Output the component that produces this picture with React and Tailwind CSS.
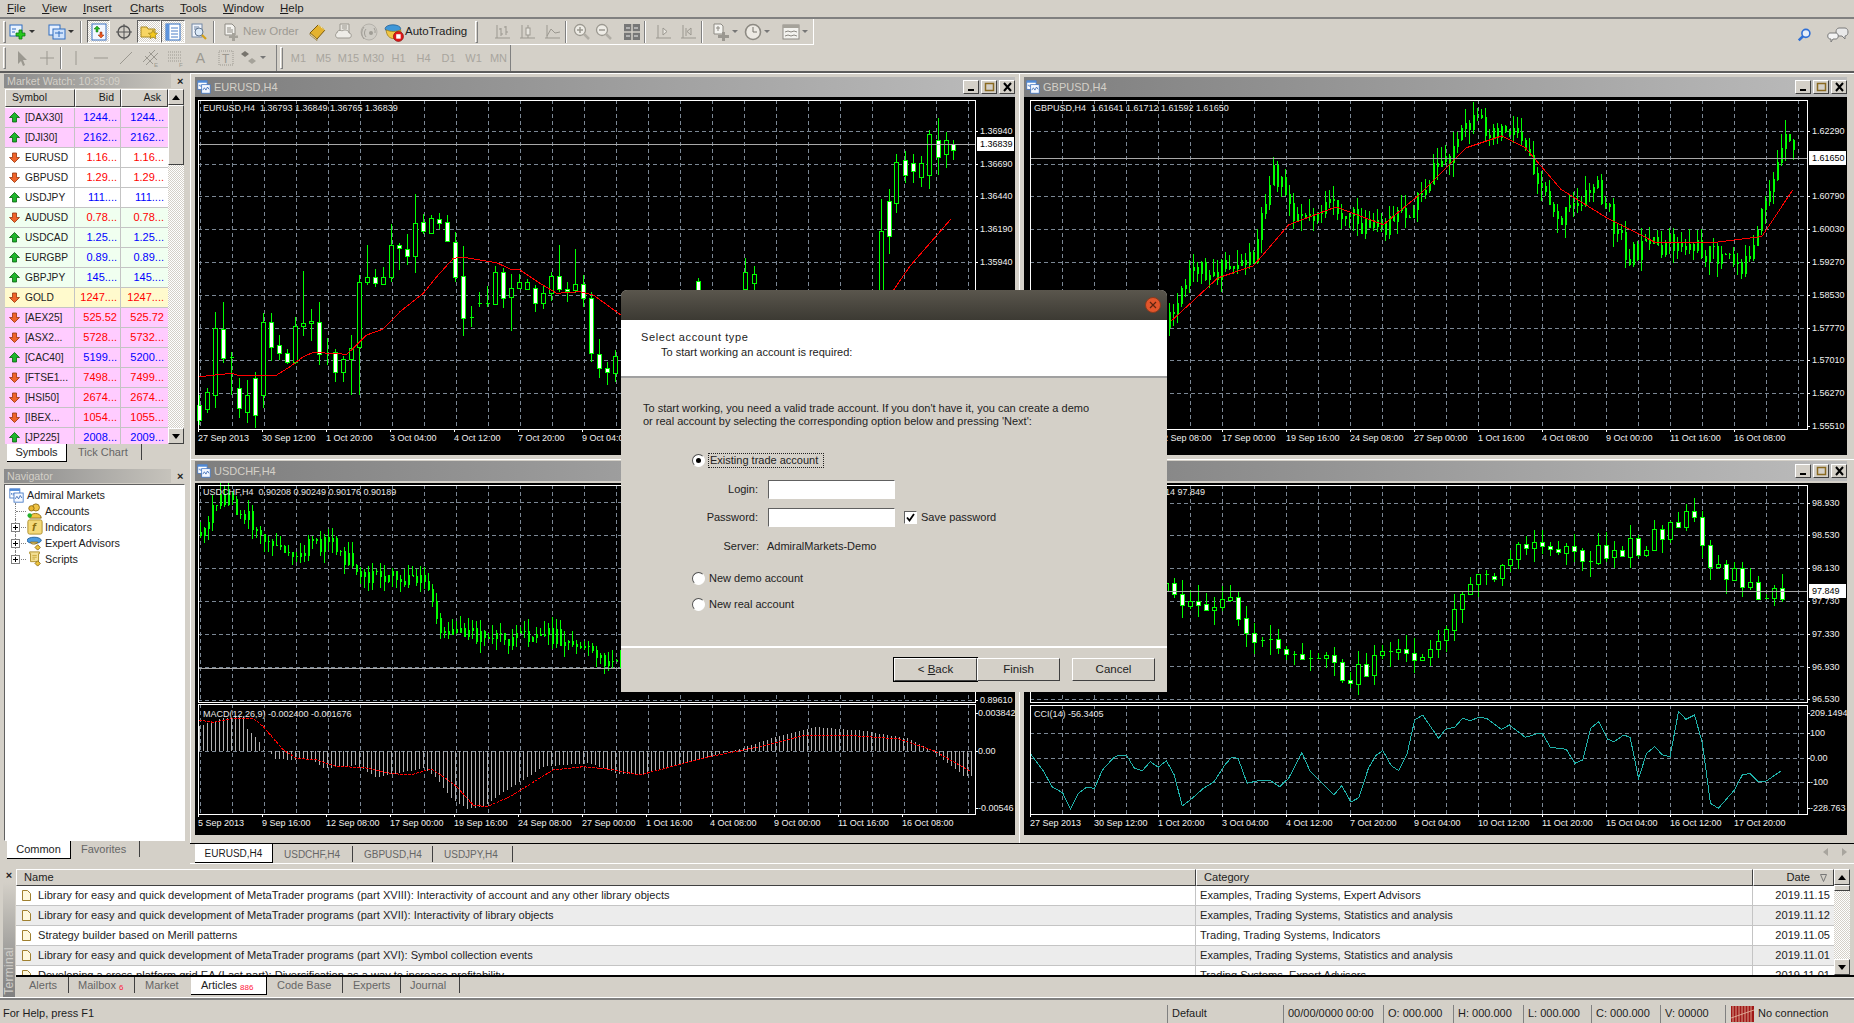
import React from 'react'

const raised = "border border-t-white border-l-white border-r-[#404040] border-b-[#404040]"
const sunken = "border border-t-[#606060] border-l-[#606060] border-r-white border-b-white"
const track = "bg-[repeating-conic-gradient(#d4d0c8_0%_25%,#ffffff_0%_50%)] bg-[length:2px_2px]"
const GRN = '#00ff00'
const GRID = '#7b8794'
const G = '#9b9890'

// ---- chart helpers ----
const rng = (seed) => () => {
  seed = (seed + 0x6d2b79f5) | 0
  let t = Math.imul(seed ^ (seed >>> 15), 1 | seed)
  t = (t + Math.imul(t ^ (t >>> 7), 61 | t)) ^ t
  return ((t ^ (t >>> 14)) >>> 0) / 4294967296
}
const interp = (path, x) => {
  if (x <= path[0][0]) return path[0][1]
  for (let i = 1; i < path.length; i++) {
    if (x <= path[i][0]) {
      const [a, b] = [path[i - 1], path[i]]
      return a[1] + ((x - a[0]) / (b[0] - a[0])) * (b[1] - a[1])
    }
  }
  return path[path.length - 1][1]
}
const d = (pts) => pts.map(([x, y]) => [x * 1.1824, y * 1.1824])
const z8 = (pts) => pts.map(([x, y]) => [190 + x / 3, 75 + y / 3])
const z9 = (pts) => pts.map(([x, y]) => [190 + x / 3, 690 + y / 3])

function genCandles(path, x0, x1, step, seed, spread) {
  const r = rng(seed)
  const out = []
  let prev = interp(path, x0 - step)
  for (let x = x0; x <= x1; x += step) {
    const c = interp(path, x) + (r() - 0.5) * spread
    const top = Math.min(prev, c)
    const bot = Math.max(prev, c)
    out.push([x, top - r() * spread * 0.7, top, bot, bot + r() * spread * 0.7, c > prev])
    prev = c
  }
  return out
}

// x, wick top, body top, body bottom, wick bottom, white body (zoomed coordinates)
const eurLeft = [
  [28, 960, 990, 1035, 1050, 1], [52, 940, 950, 1000, 1015, 0], [76, 712, 760, 960, 1000, 0], [100, 680, 762, 848, 865, 1],
  [124, 832, 847, 848, 960, 0], [148, 910, 940, 1000, 1030, 1], [172, 915, 960, 1010, 1045, 0], [196, 890, 910, 1020, 1060, 1],
  [220, 715, 742, 960, 1000, 0], [244, 715, 740, 815, 858, 1], [268, 780, 811, 835, 855, 1], [292, 822, 835, 862, 866, 1],
  [316, 725, 754, 862, 866, 0], [340, 588, 745, 754, 783, 0], [364, 702, 739, 746, 798, 0], [388, 682, 740, 835, 870, 1],
  [412, 790, 835, 837, 870, 0], [436, 822, 832, 892, 920, 1], [460, 842, 853, 893, 920, 0], [484, 780, 818, 850, 960, 0],
  [508, 600, 622, 817, 960, 0], [532, 510, 606, 620, 630, 0], [556, 582, 607, 625, 636, 1], [580, 576, 606, 628, 630, 0],
  [604, 448, 511, 607, 622, 0], [628, 504, 511, 520, 585, 1], [652, 477, 523, 544, 570, 1], [676, 358, 445, 545, 594, 0],
  [700, 418, 442, 470, 478, 1], [724, 420, 430, 476, 476, 0], [748, 415, 431, 442, 462, 1], [772, 420, 442, 500, 500, 1],
  [796, 472, 500, 605, 622, 1], [820, 514, 602, 728, 783, 1], [844, 693, 725, 727, 756, 0], [868, 650, 683, 685, 695, 0],
  [892, 634, 683, 686, 695, 0], [916, 572, 590, 685, 686, 0], [940, 578, 590, 667, 698, 1], [964, 597, 640, 667, 768, 0],
  [988, 597, 620, 637, 642, 0], [1012, 612, 620, 642, 645, 0], [1036, 630, 640, 685, 710, 1], [1060, 632, 655, 686, 702, 0],
  [1084, 590, 604, 655, 678, 0], [1108, 510, 604, 643, 650, 1], [1132, 622, 643, 650, 680, 1], [1156, 522, 628, 647, 655, 0],
  [1180, 600, 628, 670, 695, 1], [1204, 650, 670, 835, 862, 1], [1228, 792, 838, 880, 910, 1], [1252, 860, 880, 892, 930, 1],
  [1276, 825, 842, 892, 920, 0],
].map(([x, a, b, c, e, f]) => [190 + x / 3, 75 + a / 3, 75 + b / 3, 75 + c / 3, 75 + e / 3, !!f])

const eurRight = [
  [590, 235, 238, 246, 262, 1], [630, 218, 230, 244, 260, 0], [638, 225, 232, 240, 255, 0],
  [745, 168, 195, 245, 262, 0], [752, 160, 170, 200, 215, 1], [758, 130, 137, 172, 180, 0], [765, 128, 135, 148, 155, 1],
  [772, 130, 138, 145, 155, 1], [779, 132, 138, 150, 158, 0], [786, 110, 113, 148, 160, 0], [793, 100, 118, 132, 148, 1],
  [800, 112, 118, 130, 142, 0], [806, 118, 122, 127, 135, 1],
].map(([x, a, b, c, e, f]) => [x * 1.1824, a * 1.1824, b * 1.1824, c * 1.1824, e * 1.1824, !!f])

const eurMa = [
  ...z8([[28, 905], [95, 898], [125, 895], [140, 900], [260, 900], [300, 875], [340, 845], [370, 832], [470, 838], [500, 810], [530, 780], [580, 762], [630, 710], [700, 655], [740, 605], [790, 550], [820, 547], [920, 563], [960, 582], [990, 585], [1050, 625], [1100, 655], [1170, 650], [1210, 660], [1290, 718]]),
  [880, 310], [910, 266], [951, 219],
]

const gbpPath = d([[980, 280], [990, 270], [1010, 225], [1030, 230], [1060, 215], [1075, 140], [1095, 180], [1130, 175], [1160, 195], [1190, 180], [1215, 140], [1245, 105], [1285, 110], [1305, 160], [1320, 185], [1350, 155], [1375, 215], [1420, 205], [1480, 225], [1495, 160], [1510, 120], [1520, 130]])
const gbpMa = d([[990, 272], [1030, 235], [1060, 225], [1090, 190], [1130, 175], [1170, 190], [1200, 165], [1240, 125], [1270, 115], [1290, 125], [1320, 160], [1360, 185], [1400, 205], [1450, 205], [1490, 200], [1516, 161]])
const chfPath = d([[170, 450], [185, 420], [205, 430], [230, 465], [280, 460], [310, 490], [360, 490], [370, 535], [420, 540], [460, 535], [500, 550], [525, 565]])
const jpyPath = d([[985, 500], [1010, 520], [1040, 510], [1060, 535], [1100, 550], [1140, 575], [1170, 555], [1190, 560], [1220, 535], [1250, 490], [1290, 465], [1340, 470], [1390, 460], [1430, 430], [1445, 480], [1480, 490], [1495, 510], [1510, 500]])

const macdSignal = [
  ...z9([[26, 90], [70, 97], [130, 85], [190, 85], [220, 110], [280, 180], [320, 205], [380, 210], [440, 230], [520, 232], [600, 250], [660, 255], [725, 237], [760, 260], [800, 290], [850, 345], [890, 350], [960, 320], [1040, 270], [1090, 240], [1180, 230], [1260, 238], [1350, 255]]),
  ...d([[600, 640], [640, 632], [680, 622], [720, 622], [760, 625], [790, 635], [820, 652]]),
]
const macdHist = [
  ...z9([[26, 110], [50, 100], [100, 85], [160, 80], [172, 115], [208, 155], [222, 184], [240, 184], [250, 205], [300, 210], [360, 205], [400, 235], [500, 225], [560, 262], [620, 250], [700, 235], [740, 265], [780, 320], [830, 356], [880, 350], [920, 320], [1000, 270], [1060, 230], [1150, 222], [1200, 220], [1280, 250], [1350, 255]]),
  ...d([[600, 640], [630, 632], [660, 622], [690, 615], [730, 618], [770, 625], [790, 636], [815, 656]]),
]
const cci = [[20, 162], [45, 215], [60, 260], [80, 278], [95, 328], [110, 280], [125, 262], [140, 265], [155, 210], [175, 175], [185, 165], [200, 165], [215, 205], [230, 212], [245, 185], [260, 202], [275, 182], [290, 225], [305, 318], [320, 300], [345, 265], [365, 245], [385, 195], [398, 172], [410, 175], [427, 250], [445, 243], [470, 241], [488, 260], [505, 235], [530, 158], [545, 212], [565, 245], [590, 285], [605, 257], [622, 306], [637, 293], [655, 205], [670, 165], [682, 152], [698, 197], [712, 212], [728, 160], [742, 60], [757, 45], [772, 80], [787, 115], [800, 88], [817, 82], [832, 55], [847, 62], [862, 52], [877, 55], [905, 88], [920, 75], [950, 112], [975, 100], [982, 100], [997, 142], [1027, 148], [1043, 190], [1058, 180], [1073, 85], [1088, 65], [1105, 118], [1117, 125], [1135, 105], [1147, 112], [1163, 235], [1178, 160], [1193, 140], [1208, 165], [1222, 170], [1238, 35], [1252, 58], [1268, 45], [1283, 130], [1298, 310], [1313, 325], [1343, 270], [1358, 225], [1372, 220], [1388, 245], [1403, 243], [1430, 214]]
  .map(([x, y]) => [1020 + x / 1.88, 700 + y / 3])

const range = (a, b, s) => { const o = []; for (let v = a; v <= b; v += s) o.push(v); return o }
const pts = (p) => p.map(([x, y]) => `${x.toFixed(1)},${y.toFixed(1)}`).join(' ')

function Candles({ data, w = 4, solid = false }) {
  return data.map(([x, a, b, c, e, white], i) => {
    const px = Math.round(x) + 0.5
    if (solid) {
      return (
        <g key={i} shapeRendering="crispEdges">
          <line x1={px} x2={px} y1={a} y2={e} stroke={GRN} />
          <line x1={px + 1} x2={px + 1} y1={b} y2={c + 1} stroke={GRN} />
        </g>
      )
    }
    return (
      <g key={i} shapeRendering="crispEdges">
        <line x1={px} x2={px} y1={a} y2={e} stroke={GRN} />
        {c - b < 2
          ? <line x1={px - Math.floor(w / 2)} x2={px + Math.ceil(w / 2)} y1={Math.round(b) + 0.5} y2={Math.round(b) + 0.5} stroke={GRN} />
          : <rect x={px - w / 2} y={Math.round(b) + 0.5} width={w} height={Math.round(c - b)} fill={white ? '#fff' : '#000'} stroke={GRN} />}
      </g>
    )
  })
}

function Plot({ left, right, top, bottom, hs, vs = 199.7, children }) {
  return (
    <g>
      <g stroke={GRID} strokeDasharray="4 3" shapeRendering="crispEdges">
        {range(vs, right - 2, 32).map((x) => <line key={x} x1={Math.round(x) + 0.5} x2={Math.round(x) + 0.5} y1={top} y2={bottom} />)}
        {hs.map((y) => <line key={y} x1={left} x2={right} y1={Math.round(y) + 0.5} y2={Math.round(y) + 0.5} />)}
      </g>
      {children}
      <rect x={left + 0.5} y={top + 0.5} width={right - left} height={bottom - top} fill="none" stroke="#fff" shapeRendering="crispEdges" />
    </g>
  )
}

function Axis({ x, labels, dx = 5 }) {
  return labels.map(([t, y]) => (
    <g key={t}>
      <line x1={x} x2={x + 3} y1={Math.round(y) + 0.5} y2={Math.round(y) + 0.5} stroke="#fff" shapeRendering="crispEdges" />
      <text x={x + dx} y={y + 3} fontSize="9" fill="#f0f0f0">{t}</text>
    </g>
  ))
}

function TimeAxis({ left, y, labels }) {
  return labels.map((t, i) => (
    <g key={t}>
      <line x1={left + 64 * i + 0.5} x2={left + 64 * i + 0.5} y1={y} y2={y + 3} stroke="#fff" shapeRendering="crispEdges" />
      <text x={left + 64 * i} y={y + 12} fontSize="9" fill="#f0f0f0">{t}</text>
    </g>
  ))
}

function PriceTag({ x, y, t }) {
  return (
    <g>
      <rect x={x + 1} y={y - 7} width="37" height="14" fill="#fff" />
      <text x={x + 4} y={y + 3} fontSize="9" fill="#000">{t}</text>
    </g>
  )
}

const Info = ({ x, y, t }) => <text x={x} y={y} fontSize="9" fill="#e8e8e8" xmlSpace="preserve">{t}</text>
const PriceLine = ({ a, b, y }) => <line x1={a} x2={b} y1={y + 0.5} y2={y + 0.5} stroke="#a8a8a8" shapeRendering="crispEdges" />
const Curve = ({ p, c = '#ff0000', dash }) => <polyline points={pts(p)} fill="none" stroke={c} strokeDasharray={dash} shapeRendering="crispEdges" />

function ChartSvg({ ox, oy, w, h, children }) {
  return (
    <svg width={w} height={h} viewBox={`${ox} ${oy} ${w} ${h}`} className="block bg-black">{children}</svg>
  )
}

const timesA = ['5 Sep 2013', '9 Sep 16:00', '12 Sep 08:00', '17 Sep 00:00', '19 Sep 16:00', '24 Sep 08:00', '27 Sep 00:00', '1 Oct 16:00', '4 Oct 08:00', '9 Oct 00:00', '11 Oct 16:00', '16 Oct 08:00']
const timesB = ['27 Sep 2013', '30 Sep 12:00', '1 Oct 20:00', '3 Oct 04:00', '4 Oct 12:00', '7 Oct 20:00', '9 Oct 04:00', '10 Oct 12:00', '11 Oct 20:00', '15 Oct 04:00', '16 Oct 12:00', '17 Oct 20:00']
const hsTop = range(130.7, 420, 32.8)

function EurChart() {
  return (
    <ChartSvg ox={195} oy={97} w={820} h={358}>
      <Plot left={198} right={975} top={100} bottom={429} hs={hsTop}>
        <Candles data={eurLeft} />
        <Candles data={eurRight} />
        <Curve p={eurMa} />
        <Info x={203} y={111} t="EURUSD,H4  1.36793 1.36849 1.36765 1.36839" />
        <PriceLine a={199} b={976} y={144} />
      </Plot>
      <Axis x={975} labels={[['1.36940', 130.7], ['1.36690', 163.5], ['1.36440', 196.3], ['1.36190', 229.1], ['1.35940', 261.9]]} />
      <PriceTag x={976} y={144} t="1.36839" />
      <TimeAxis left={198} y={429} labels={timesB.slice(0, 8)} />
    </ChartSvg>
  )
}

function GbpChart() {
  return (
    <ChartSvg ox={1024} oy={97} w={823} h={358}>
      <Plot left={1030} right={1807} top={100} bottom={429} hs={hsTop} vs={1029.7}>
        <Candles data={genCandles(gbpPath, 1161, 1793, 4, 11, 22)} solid />
        <Curve p={gbpMa} />
        <Info x={1034} y={111} t="GBPUSD,H4  1.61641 1.61712 1.61592 1.61650" />
        <PriceLine a={1031} b={1808} y={158} />
      </Plot>
      <Axis x={1807} labels={[['1.62290', 130.7], ['1.60790', 196.3], ['1.60030', 229.1], ['1.59270', 261.9], ['1.58530', 294.7], ['1.57770', 327.5], ['1.57010', 360.3], ['1.56270', 393.1], ['1.55510', 425.9]]} />
      <PriceTag x={1808} y={158} t="1.61650" />
      <TimeAxis left={1030} y={429} labels={timesA} />
    </ChartSvg>
  )
}

function ChfChart() {
  return (
    <ChartSvg ox={195} oy={483} w={820} h={352}>
      <Plot left={198} right={975} top={485} bottom={702} hs={range(502, 700, 33)}>
        <Candles data={genCandles(chfPath, 200, 628, 4, 5, 18)} solid />
        <Info x={203} y={495} t="USDCHF,H4  0.90208 0.90249 0.90176 0.90189" />
        <PriceLine a={199} b={975} y={668} />
      </Plot>
      <Axis x={975} labels={[['0.89610', 700]]} />
      <Plot left={198} right={975} top={704} bottom={814} hs={[751]}>
        {range(199.5, 972, 4).map((x) => {
          const y = interp(macdHist, x)
          return <line key={x} x1={x} x2={x} y1={751} y2={y} stroke="#b0b0b0" shapeRendering="crispEdges" />
        })}
        <Curve p={macdSignal} dash="3 1" />
        <Info x={203} y={717} t="MACD(12,26,9) -0.002400 -0.001676" />
      </Plot>
      <Axis x={975} dx={3} labels={[['0.003842', 713], ['0.00', 751], ['-0.00546', 808]]} />
      <TimeAxis left={198} y={814} labels={timesA} />
    </ChartSvg>
  )
}

function JpyChart() {
  return (
    <ChartSvg ox={1024} oy={483} w={823} h={352}>
      <Plot left={1030} right={1807} top={485} bottom={702} hs={range(502.5, 700, 32.8)} vs={1029.7}>
        <Candles data={genCandles(jpyPath, 1166, 1786, 8, 23, 22)} />
        <Info x={1034} y={495} t="USDJPY,H4  97.814 97.860 97.814 97.849" />
        <PriceLine a={1031} b={1808} y={591} />
      </Plot>
      <Axis x={1807} labels={[['98.930', 502.5], ['98.530', 535.3], ['98.130', 568.1], ['97.730', 600.9], ['97.330', 633.7], ['96.930', 666.5], ['96.530', 699.3]]} />
      <PriceTag x={1808} y={591} t="97.849" />
      <Plot left={1030} right={1807} top={705} bottom={814} hs={[733, 758, 782]} vs={1029.7}>
        <Curve p={cci} c="#20b2aa" />
        <Info x={1034} y={717} t="CCI(14) -56.3405" />
      </Plot>
      <Axis x={1807} dx={3} labels={[['209.1494', 713], ['100', 733], ['0.00', 758], ['-100', 782], ['-228.763', 808]]} />
      <TimeAxis left={1030} y={814} labels={timesB} />
    </ChartSvg>
  )
}

// ---- icons ----
const Svg = ({ s = 18, children, className }) => <svg width={s} height={s} viewBox="0 0 18 18" className={className}>{children}</svg>
const Caret = ({ c = '#333' }) => <svg width="6" height="4" viewBox="0 0 6 4" className="ml-[2px]"><path d="M0 0h6L3 3z" fill={c} /></svg>

const WinIco = ({ s = 14 }) => (
  <Svg s={s}>
    <rect x="1" y="1" width="12" height="11" fill="#fff" stroke="#3f74c4" />
    <rect x="1" y="1" width="12" height="2.5" fill="#4f8ad8" />
    <rect x="6" y="6" width="11" height="11" fill="#f4f8ff" stroke="#3f74c4" />
    <path d="M7.5 13l2-3 2 3 2-4 2 3" fill="none" stroke="#2e62b0" />
    <path d="M3 6v2M5 6v3" stroke="#3f74c4" />
  </Svg>
)
const NewChartIco = () => (
  <Svg>
    <rect x="1" y="2" width="12" height="11" fill="#eaf3ff" stroke="#2f6cc0" />
    <path d="M3 6h4M3 9h3" stroke="#2f6cc0" />
    <path d="M10 7h3v3h3v3h-3v3h-3v-3H7v-3h3z" fill="#25c81e" stroke="#0f7a10" strokeWidth=".8" />
  </Svg>
)
const ProfilesIco = () => (
  <Svg>
    <rect x="1" y="2" width="11" height="10" fill="#e8f1ff" stroke="#2f6cc0" />
    <rect x="5" y="6" width="12" height="10" fill="#cfe2fb" stroke="#2f6cc0" />
    <path d="M7 10h8M11 8v6" stroke="#2f6cc0" />
  </Svg>
)
const WatchIco = () => (
  <Svg>
    <rect x="2" y="1" width="14" height="16" fill="#f3f7ff" stroke="#3f74c4" />
    <path d="M7 3l3 3H8v3H6V6H4z" fill="#25b825" stroke="#0d6d0d" strokeWidth=".5" />
    <path d="M11 15l-3-3h2V9h2v3h2z" fill="#ee5a22" stroke="#8a2b08" strokeWidth=".5" />
  </Svg>
)
const CrossIco = () => (
  <Svg>
    <circle cx="9" cy="9" r="6" fill="none" stroke="#555" strokeWidth="1.4" />
    <path d="M9 1v16M1 9h16" stroke="#555" />
  </Svg>
)
const FolderStarIco = () => (
  <Svg>
    <path d="M1 4h6l1 2h7v8H1z" fill="#f7d564" stroke="#a98920" />
    <path d="M13 7l1.4 3 3.2.3-2.4 2.2.7 3.2-2.9-1.7-2.9 1.7.7-3.2L8.4 10.3l3.2-.3z" fill="#f5c91f" stroke="#8a7414" strokeWidth=".6" />
  </Svg>
)
const TermIco = () => (
  <Svg>
    <rect x="2" y="1" width="14" height="16" fill="#fff" stroke="#2f6cc0" />
    <rect x="2" y="1" width="3.5" height="16" fill="#5c93dc" />
    <path d="M7 5h7M7 8h7M7 11h7M7 14h7" stroke="#4a7fc8" />
  </Svg>
)
const TesterIco = () => (
  <Svg>
    <rect x="2" y="1" width="10" height="13" fill="#f0f4fb" stroke="#7288a6" />
    <circle cx="9" cy="9" r="4" fill="#dbe9f7" stroke="#60758f" />
    <path d="M12 12l4 4" stroke="#d4a017" strokeWidth="2.2" />
    <path d="M4 4h5M4 6h3" stroke="#7288a6" />
  </Svg>
)
const OrderIco = () => (
  <Svg>
    <path d="M3 1h7l3 3v8H3z" fill="#f4f3ef" stroke="#8d8a83" />
    <path d="M5 5h4M5 7h6M5 9h6" stroke="#8d8a83" />
    <path d="M10 10h3v2.500h3V15h-3v3h-3v-3H7v-2.500h3z" fill="#a5a29a" />
  </Svg>
)
const BookIco = () => (
  <Svg>
    <path d="M1 10l8-8 7 5-8 9z" fill="#e4b22e" stroke="#7a5a10" />
    <path d="M1 10l7 6v1.500L1 12z" fill="#f6e6b0" stroke="#7a5a10" strokeWidth=".6" />
    <path d="M9 2l7 5" stroke="#fbe48f" />
  </Svg>
)
const EditorIco = () => (
  <Svg>
    <path d="M5 1h9v9H5z" fill="#e6e4de" stroke={G} />
    <path d="M2 10c0-3 4-3 5-2 2-2 7-1 7 2 3 0 3 5 0 5H3c-3 0-3-5-1-5z" fill="#eeece7" stroke={G} />
    <path d="M7 3h5M7 5h5" stroke={G} />
  </Svg>
)
const SignalIco = () => (
  <Svg>
    <circle cx="9" cy="9" r="8" fill="#d0cdc6" stroke="#b5b2ab" />
    <circle cx="11" cy="10" r="2" fill="#a09d96" />
    <path d="M6 6a6 6 0 0 0 0 8M4 4a9 9 0 0 0 0 12M14 5a6 6 0 0 1 1 5" fill="none" stroke="#a09d96" />
  </Svg>
)
const AutoIco = () => (
  <Svg s={20}>
    <ellipse cx="8" cy="6" rx="7" ry="3.500" fill="#3f97d8" stroke="#1e5d96" strokeWidth=".7" />
    <path d="M2 7c0 5 3 8 7 8s7-3 6-8c-3 2-10 2-13 0z" fill="#f1c644" stroke="#9c7a14" strokeWidth=".7" />
    <circle cx="13" cy="13" r="4.500" fill="#e01818" stroke="#7e0a0a" strokeWidth=".6" />
    <rect x="11" y="11" width="4" height="4" fill="#fff" />
  </Svg>
)
const BarIco = ({ kind }) => (
  <Svg>
    <path d="M3 2v13M1 15h15" stroke={G} fill="none" />
    {kind === 0 && <path d="M7 5v8M7 6h-2M7 11h2M12 3v9M12 4h-2M12 9h2" stroke={G} />}
    {kind === 1 && <><path d="M9 2v13" stroke={G} /><rect x="7" y="5" width="4" height="7" fill="#e8e6e0" stroke={G} /></>}
    {kind === 2 && <path d="M3 13l4-7 4 4 5-1" stroke={G} fill="none" />}
    {kind === 3 && <path d="M8 5v7l4-3.500z" stroke={G} fill="#e8e6e0" />}
    {kind === 4 && <path d="M11 5v7l-4-3.500zM6 5v8" stroke={G} fill="none" />}
  </Svg>
)
const ZoomIco = ({ plus }) => (
  <Svg>
    <circle cx="7" cy="7" r="5.500" fill="#eeece6" stroke={G} strokeWidth="1.300" />
    <path d={plus ? 'M4 7h6M7 4v6' : 'M4 7h6'} stroke={G} strokeWidth="1.500" />
    <path d="M11 11l5 5" stroke="#b0ada5" strokeWidth="2.500" />
  </Svg>
)
const TileIco = () => (
  <Svg>
    <rect x="1" y="1" width="16" height="16" fill="#777" />
    <path d="M9 1v16M1 9h16" stroke="#d4d0c8" strokeWidth="1.500" />
    <path d="M3 5h4M11 5h4M3 13h4M11 13h4" stroke="#eee" />
  </Svg>
)
const AddIco = () => (
  <Svg>
    <path d="M2 1h7l2 2v8H2z" fill="#f4f3ef" stroke="#8d8a83" />
    <path d="M4 5h4M6 3v5" stroke="#8d8a83" />
    <path d="M10 9h3v3h4v3h-4v3h-3v-3H6v-3h4z" fill="#9a9790" />
  </Svg>
)
const ClockIco = () => (
  <Svg>
    <circle cx="9" cy="9" r="7.500" fill="#ece9e3" stroke="#8d8a83" strokeWidth="1.600" />
    <path d="M9 4v5h4" fill="none" stroke="#77746d" />
  </Svg>
)
const TemplIco = () => (
  <Svg>
    <rect x="1" y="2" width="16" height="14" fill="#f3f2ee" stroke="#8d8a83" />
    <rect x="1" y="2" width="16" height="3" fill="#a5a29a" />
    <path d="M3 9l3-1 3 1 3-1 3 1M3 13l3-1 3 1 3-1 3 1" fill="none" stroke="#8d8a83" />
  </Svg>
)
const SearchIco = () => (
  <Svg s={16}>
    <circle cx="10" cy="6" r="4.500" fill="#e6eef9" stroke="#2f6fd6" strokeWidth="1.800" />
    <path d="M7 9l-5 5" stroke="#2f6fd6" strokeWidth="2.800" />
  </Svg>
)
const ChatIco = () => (
  <svg width="22" height="18" viewBox="0 0 22 18">
    <path d="M12 1h6c4 0 4 8 0 8v3l-3-3h-3c-4 0-4-8 0-8z" fill="#e9e9e9" stroke="#7b7b7b" />
    <path d="M3 6h6c3 0 3 6 0 6H6l-2 3v-3H3c-3 0-3-6 0-6z" fill="#f4f4f4" stroke="#7b7b7b" />
  </svg>
)
const CursorIco = () => <Svg><path d="M5 2v13l3-3 2 5 2-1-2-5h4z" fill={G} /></Svg>
const LineIco = ({ p }) => <Svg><path d={p} stroke={G} fill="none" /></Svg>
const ChannelIco = () => (
  <Svg>
    <path d="M1 13L13 1M4 16L16 4M3 7l8 8M7 3l8 8" stroke={G} />
    <text x="12" y="18" fontSize="6" fill={G}>E</text>
  </Svg>
)
const FiboIco = () => (
  <Svg>
    <path d="M1 3h14M1 6h14M1 9h14M1 12h14" stroke={G} strokeDasharray="1 1" />
    <text x="12" y="18" fontSize="6" fill={G}>F</text>
  </Svg>
)
const TextIco = () => (
  <Svg>
    <rect x="2" y="2" width="14" height="14" fill="none" stroke={G} strokeDasharray="1 1" />
    <text x="5" y="14" fontSize="12" fill={G}>T</text>
  </Svg>
)
const ArrowsIco = () => (
  <Svg>
    <path d="M5 2l4 3-4 3-4-3z" fill="#77746d" />
    <path d="M12 9l4 3-4 3-4-3z" fill="#a5a29a" />
  </Svg>
)
const Up = () => <svg width="11" height="11" viewBox="0 0 11 11"><path d="M5.500 .5L10.500 5.500H7.500V10H3.500V5.500H.5z" fill="#1eb52a" stroke="#0a5f12" strokeWidth=".8" /></svg>
const Down = () => <svg width="11" height="11" viewBox="0 0 11 11"><path d="M5.500 10.500L10.500 5.500H7.500V1H3.500V5.500H.5z" fill="#f0632a" stroke="#96350c" strokeWidth=".8" /></svg>
const AccountsIco = () => (
  <Svg s={16}>
    <circle cx="10" cy="5" r="4" fill="#f0c445" stroke="#8b6a12" />
    <path d="M3 17c0-7 13-7 13 0z" fill="#f0c445" stroke="#8b6a12" />
    <circle cx="5" cy="6" r="3" fill="#e9b52f" stroke="#8b6a12" />
    <circle cx="3" cy="14" r="2.500" fill="#23b12c" />
  </Svg>
)
const IndicatorsIco = () => (
  <Svg s={16}>
    <rect x="1" y="1" width="16" height="16" rx="2" fill="#f3d97a" stroke="#a98920" />
    <text x="5.500" y="14" fontSize="13" fontStyle="italic" fontWeight="700" fill="#8a6d10">f</text>
  </Svg>
)
const ExpertIco = () => (
  <Svg s={16}>
    <ellipse cx="8" cy="6" rx="8" ry="3.500" fill="#4d9be0" stroke="#1e5d96" />
    <path d="M4 8c0 3 7 3 8 0z" fill="#f2d879" stroke="#8b6a12" />
    <path d="M12 11l3 3-3 3-3-3z" fill="#eec33b" stroke="#8b6a12" />
  </Svg>
)
const ScriptIco = () => (
  <Svg s={16}>
    <path d="M3 1h11v2h-1v9H4V3H3z" fill="#f3df93" stroke="#a98920" />
    <path d="M6 5h5M6 7h5M6 9h3" stroke="#c9a73a" />
    <path d="M12 11l3 3-3 3-3-3z" fill="#eec33b" stroke="#8b6a12" />
  </Svg>
)

// ---- chrome ----
const U = ({ c, rest }) => <><span className="underline">{c}</span>{rest}</>

function MenuBar() {
  const items = [['F', 'ile', 'w-[35px]'], ['V', 'iew', 'w-[41px]'], ['I', 'nsert', 'w-[47px]'], ['C', 'harts', 'w-[50px]'], ['T', 'ools', 'w-[43px]'], ['W', 'indow', 'w-[57px]'], ['H', 'elp', 'w-[40px]']]
  return (
    <div className="h-[19px] shrink-0 flex pl-[7px] items-center border-b-2 border-b-[#808080] text-[11.5px]">
      {items.map(([c, r, w]) => <span key={c} className={w}><U c={c} rest={r} /></span>)}
    </div>
  )
}

const Grip = () => <span className="w-[3px] h-[22px] mx-[3px] border border-t-white border-l-white border-r-[#808080] border-b-[#808080] shrink-0" />
const Sep = ({ className = '' }) => <span className={`w-[2px] h-[22px] bg-[#808080] border-r border-r-white shrink-0 ${className}`} />
const Gap = ({ w }) => <span className={`${w} shrink-0`} />
const Tool = ({ w = 'w-[25px]', pressed, children }) => (
  <span className={`${w} h-[23px] shrink-0 flex items-center justify-center ${pressed ? `bg-[repeating-conic-gradient(#d4d0c8_0%_25%,#ffffff_0%_50%)] bg-[length:2px_2px] ${sunken}` : ''}`}>{children}</span>
)

function Toolbars() {
  const tf = ['M1', 'M5', 'M15', 'M30', 'H1', 'H4', 'D1', 'W1', 'MN']
  return (
    <div className="h-[54px] shrink-0 border-b-2 border-b-[#5c5c5c]">
      <div className="h-[26px] flex justify-between pr-[5px]">
        <div className="w-[814px] flex items-center border-r border-b border-r-white border-b-white">
          <Grip />
          <Tool w="w-[26px]"><NewChartIco /><Caret /></Tool>
          <Gap w="w-[11px]" />
          <Tool w="w-[30px]"><ProfilesIco /><Caret /></Tool>
          <Sep className="mx-[4px]" />
          <Gap w="w-[1px]" />
          <Tool w="w-[23px]" pressed><WatchIco /></Tool>
          <Tool w="w-[27px]"><CrossIco /></Tool>
          <Tool w="w-[24px]" pressed><FolderStarIco /></Tool>
          <Tool w="w-[24px]" pressed><TermIco /></Tool>
          <Tool w="w-[27px]"><TesterIco /></Tool>
          <Sep className="mx-[1px]" />
          <span className="w-[84px] flex items-center gap-[3px] pl-[6px] text-[#9d9a93] shrink-0"><OrderIco /><span className="text-[11.5px]">New Order</span></span>
          <Gap w="w-[6px]" />
          <Tool w="w-[24px]"><BookIco /></Tool>
          <Gap w="w-[2px]" />
          <Tool w="w-[24px]"><EditorIco /></Tool>
          <Gap w="w-[1px]" />
          <Tool w="w-[24px]"><SignalIco /></Tool>
          <Gap w="w-[3px]" />
          <span className="w-[88px] flex items-center gap-[1px] shrink-0 text-[11.5px] text-[#222]"><AutoIco />AutoTrading</span>
          <Grip />
          <Gap w="w-[9px]" />
          <Tool><BarIco kind={0} /></Tool>
          <Tool><BarIco kind={1} /></Tool>
          <Tool><BarIco kind={2} /></Tool>
          <Sep />
          <Gap w="w-[4px]" />
          <Tool w="w-[22px]"><ZoomIco plus /></Tool>
          <Tool w="w-[22px]"><ZoomIco /></Tool>
          <Gap w="w-[5px]" />
          <Tool w="w-[24px]"><TileIco /></Tool>
          <Sep />
          <Gap w="w-[5px]" />
          <Tool><BarIco kind={3} /></Tool>
          <Tool><BarIco kind={4} /></Tool>
          <Sep />
          <Gap w="w-[7px]" />
          <Tool w="w-[30px]"><AddIco /><Caret c="#777" /></Tool>
          <Gap w="w-[1px]" />
          <Tool w="w-[32px]"><ClockIco /><Caret c="#777" /></Tool>
          <Gap w="w-[7px]" />
          <Tool w="w-[30px]"><TemplIco /><Caret c="#777" /></Tool>
        </div>
        <div className="flex items-center gap-[14px] pt-[8px]"><SearchIco /><ChatIco /></div>
      </div>
      <div className="h-[26px] flex">
        <div className="w-[277px] flex items-center border-r border-r-[#808080]">
          <Grip />
          <Tool><CursorIco /></Tool>
          <Tool><LineIco p="M9 2v14M2 9h14" /></Tool>
          <Sep className="mx-[1px]" />
          <Tool><LineIco p="M9 2v14" /></Tool>
          <Tool><LineIco p="M2 9h14" /></Tool>
          <Tool><LineIco p="M3 15L15 3" /></Tool>
          <Tool><ChannelIco /></Tool>
          <Tool><FiboIco /></Tool>
          <Tool><span className="text-[#9b9890] text-[14px]">A</span></Tool>
          <Tool><TextIco /></Tool>
          <Tool w="w-[30px]"><ArrowsIco /><Caret c="#777" /></Tool>
        </div>
        <div className="w-[234px] flex items-center border-r border-r-[#808080] text-[#a8a59e] text-[11px]">
          <Grip />
          {tf.map((t) => <span key={t} className="w-[25px] shrink-0 text-center">{t}</span>)}
        </div>
      </div>
    </div>
  )
}

const Title = ({ t }) => (
  <div className="flex h-[14px] shrink-0 ml-[4px] mr-[5px] items-center">
    <div className="w-[167px] h-full bg-gradient-to-r from-[#8b8b8b] to-[#c6c3bc] text-[#d4d0c8] pl-[3px] text-[10.7px] leading-[14px]">{t}</div>
    <span className="ml-[6px] text-[11px] font-bold leading-none text-[#222]">×</span>
  </div>
)

const symbols = [
  ['[DAX30]', '1244...', 1, 'p'], ['[DJI30]', '2162...', 1, 'p'], ['EURUSD', '1.16...', 0, 'w'], ['GBPUSD', '1.29...', 0, 'w'],
  ['USDJPY', '111....', 1, 'w'], ['AUDUSD', '0.78...', 0, 'g'], ['USDCAD', '1.25...', 1, 'g'], ['EURGBP', '0.89...', 1, 'g'],
  ['GBPJPY', '145....', 1, 'g'], ['GOLD', '1247....', 0, 'y'], ['[AEX25]', '525.52', 0, 'p', '525.72'], ['[ASX2...', '5728...', 0, 'p', '5732...'],
  ['[CAC40]', '5199...', 1, 'p', '5200...'], ['[FTSE1...', '7498...', 0, 'p', '7499...'], ['[HSI50]', '2674...', 0, 'p'],
  ['[IBEX...', '1054...', 0, 'p', '1055...'], ['[JP225]', '2008...', 1, 'p', '2009...'],
]
const bgs = { p: 'bg-[#ffccff]', w: 'bg-white', g: 'bg-[#f0fff0]', y: 'bg-[#fffacd]' }

function HeadCell({ w, right, children }) {
  return <div className={`${w} h-full flex items-center px-[6px] bg-[#d4d0c8] text-[10.5px] ${raised} ${right ? 'justify-end' : ''}`}>{children}</div>
}

function ScrollBtn({ up }) {
  return (
    <div className={`w-[16px] h-[16px] shrink-0 bg-[#d4d0c8] flex items-center justify-center ${raised}`}>
      <svg width="8" height="5" viewBox="0 0 8 5"><path d={up ? 'M0 5h8L4 0z' : 'M0 0h8L4 5z'} fill="#000" /></svg>
    </div>
  )
}

function MarketWatch() {
  return (
    <div className="h-[392px] shrink-0 flex flex-col pt-[1px]">
      <Title t="Market Watch: 10:35:09" />
      <div className="ml-[5px] mr-[6px] mt-[1px] flex h-[355px]">
        <div className="w-[163px] h-full overflow-hidden bg-white">
          <div className="flex h-[18px] mb-[1px]">
            <HeadCell w="w-[70px]">Symbol</HeadCell>
            <HeadCell w="w-[46px]" right>Bid</HeadCell>
            <HeadCell w="w-[47px]" right>Ask</HeadCell>
          </div>
          {symbols.map(([s, b, up, c, a]) => (
            <div key={s} className={`flex h-[20px] items-center border-b border-b-[#c4c4c4] ${bgs[c]}`}>
              <div className="w-[70px] h-full flex items-center pl-[4px] gap-[5px] border-r border-r-[#c4c4c4] text-[#222] text-[10.2px]">{up ? <Up /> : <Down />}{s}</div>
              <div className={`w-[46px] h-full flex items-center justify-end pr-[3px] border-r border-r-[#c4c4c4] ${up ? 'text-[#0000ff]' : 'text-[#ff0000]'}`}>{b}</div>
              <div className={`w-[47px] h-full flex items-center justify-end pr-[4px] ${up ? 'text-[#0000ff]' : 'text-[#ff0000]'}`}>{a || b}</div>
            </div>
          ))}
        </div>
        <div className="w-[16px] flex flex-col">
          <ScrollBtn up />
          <div className={`flex-1 ${track}`}>
            <div className={`h-[60px] bg-[#d4d0c8] ${raised}`} />
          </div>
          <ScrollBtn />
        </div>
      </div>
      <div className="flex ml-[7px] h-[18px]">
        <div className="w-[60px] bg-white border-r border-b border-r-black border-b-black flex items-center justify-center">Symbols</div>
        <div className="w-[75px] flex items-center pl-[11px] h-[16px] text-[#666] border-r border-r-[#404040]">Tick Chart</div>
      </div>
    </div>
  )
}

function TreeRow({ icon, t, plus, last }) {
  return (
    <div className="h-[16px] flex items-center">
      <div className="relative w-[18px] h-full shrink-0">
        <span className={`absolute left-[6px] top-0 w-0 border-l border-dotted border-l-[#808080] ${last ? 'h-[8px]' : 'h-full'}`} />
        <span className="absolute left-[7px] top-[8px] w-[10px] border-t border-dotted border-t-[#808080]" />
        {plus && (
          <span className="absolute left-[2px] top-[4px] w-[9px] h-[9px] bg-white border border-[#808080] flex items-center justify-center">
            <svg width="5" height="5" viewBox="0 0 5 5"><path d="M0 2.500h5M2.500 0v5" stroke="#000" /></svg>
          </span>
        )}
      </div>
      <span className="w-[18px] shrink-0 flex items-center">{icon}</span>
      <span className="text-[#222]">{t}</span>
    </div>
  )
}

function Navigator() {
  return (
    <div className="flex-1 flex flex-col">
      <div className="pt-[4px]"><Title t="Navigator" /></div>
      <div className={`ml-[4px] mr-[5px] mt-[1px] h-[357px] bg-white ${sunken} pl-[4px] pt-[2px] text-[10.8px]`}>
        <div className="h-[16px] flex items-center gap-[3px] text-[#222]"><WinIco s={15} />Admiral Markets</div>
        <TreeRow icon={<AccountsIco />} t="Accounts" />
        <TreeRow icon={<IndicatorsIco />} t="Indicators" plus />
        <TreeRow icon={<ExpertIco />} t="Expert Advisors" plus />
        <TreeRow icon={<ScriptIco />} t="Scripts" plus last />
      </div>
      <div className="flex ml-[7px] h-[18px]">
        <div className="w-[64px] bg-white border-r border-b border-r-black border-b-black flex items-center justify-center">Common</div>
        <div className="w-[69px] flex items-center pl-[10px] h-[16px] text-[#666] border-r border-r-[#404040]">Favorites</div>
      </div>
    </div>
  )
}

function WinBtn({ k }) {
  return (
    <span className={`w-[16px] h-[14px] flex items-center justify-center bg-[#d4d0c8] ${raised}`}>
      <svg width="11" height="10" viewBox="0 0 11 10">
        {k === 0 && <path d="M2 8h6" stroke="#000" strokeWidth="2" />}
        {k === 1 && <rect x="1.500" y="1.500" width="8" height="7" fill="none" stroke="#8a6a20" strokeWidth="1.500" />}
        {k === 2 && <path d="M2 1l7 8M9 1l-7 8" stroke="#000" strokeWidth="2" />}
      </svg>
    </span>
  )
}

function ChartWin({ t, className, children }) {
  return (
    <div className={`${className} bg-[#d4d0c8] border-l border-t border-l-white border-t-white flex flex-col`}>
      <div className="h-[20px] shrink-0 flex items-center pl-[2px] bg-gradient-to-r from-[#7e7e7e] to-[#bcbcbc]">
        <WinIco s={14} />
        <span className="ml-[3px] text-[11px] text-[#d4d0c8]">{t}</span>
        <span className="ml-auto flex gap-[2px]"><WinBtn k={0} /><WinBtn k={1} /><WinBtn k={2} /></span>
      </div>
      {children}
    </div>
  )
}

function Mdi() {
  return (
    <div className="flex-1 flex flex-col">
      <div className="h-[770px] grid grid-cols-[829px_835px] grid-rows-[386px_384px]">
        <ChartWin t="EURUSD,H4" className="pl-[4px] pr-[4px] pt-[3px] pb-[4px]"><EurChart /></ChartWin>
        <ChartWin t="GBPUSD,H4" className="pl-[4px] pr-[7px] pt-[3px] pb-[4px]"><GbpChart /></ChartWin>
        <ChartWin t="USDCHF,H4" className="pl-[4px] pr-[4px] pt-[1px] pb-[8px] gap-[2px]"><ChfChart /></ChartWin>
        <ChartWin t="USDJPY,H4" className="pl-[4px] pr-[7px] pt-[1px] pb-[8px] gap-[2px]"><JpyChart /></ChartWin>
      </div>
      <div className="h-[21px] border-t border-t-black flex pl-[5px] border-b border-b-white relative text-[10px]">
        <div className="w-[78px] h-[19px] bg-white border-r border-b border-r-black border-b-black flex items-center justify-center">EURUSD,H4</div>
        {['USDCHF,H4', 'GBPUSD,H4', 'USDJPY,H4'].map((t) => (
          <div key={t} className="w-[80px] h-[16px] mt-[2px] pl-[11px] flex items-center text-[#666] border-r border-r-[#404040]">{t}</div>
        ))}
        <div className="ml-auto pr-[7px] flex items-center gap-[14px] pb-[3px]">
          <svg width="5" height="8" viewBox="0 0 5 8"><path d="M5 0v8L0 4z" fill="#a8a59e" /></svg>
          <svg width="5" height="8" viewBox="0 0 5 8"><path d="M0 0v8l5-4z" fill="#a8a59e" /></svg>
        </div>
      </div>
    </div>
  )
}

const articles = [
  ['Library for easy and quick development of MetaTrader programs (part XVIII): Interactivity of account and any other library objects', 'Examples, Trading Systems, Expert Advisors', '2019.11.15'],
  ['Library for easy and quick development of MetaTrader programs (part XVII): Interactivity of library objects', 'Examples, Trading Systems, Statistics and analysis', '2019.11.12'],
  ['Strategy builder based on Merill patterns', 'Trading, Trading Systems, Indicators', '2019.11.05'],
  ['Library for easy and quick development of MetaTrader programs (part XVI): Symbol collection events', 'Examples, Trading Systems, Statistics and analysis', '2019.11.01'],
  ['Developing a cross-platform grid EA (Last part): Diversification as a way to increase profitability', 'Trading Systems, Expert Advisors', '2019.11.01'],
]

const DocIco = () => (
  <svg width="9" height="11" viewBox="0 0 9 11" className="shrink-0"><path d="M.5.5h5l3 3v7h-8z" fill="#fff8dc" stroke="#a08030" /></svg>
)

function Terminal() {
  const bottom = [['Alerts', 'w-[53px] pl-[13px]'], ['Mailbox', 'w-[66px] pl-[9px]', '6'], ['Market', 'w-[57px] pl-[10px] !border-r-0']]
  const after = [['Code Base', 'w-[76px] pl-[10px]'], ['Experts', 'w-[58px] pl-[10px]'], ['Journal', 'w-[59px] pl-[9px]']]
  return (
    <div className="h-[134px] shrink-0 flex border-b border-b-white">
      <div className="w-[16px] shrink-0 pl-[3px] pr-[1px] pt-[5px] flex flex-col">
        <span className="text-[11px] font-bold text-center leading-[12px] text-[#222]">×</span>
        <div className="flex-1 mt-[1px] bg-gradient-to-b from-[#d4d0c8] to-[#808080] flex items-end justify-center overflow-hidden">
          <span className="[writing-mode:vertical-rl] rotate-180 text-[12px] text-[#cfcdc8] pt-[2px] tracking-[0.3px]">Terminal</span>
        </div>
      </div>
      <div className="flex-1 flex flex-col pt-[5px] min-w-0">
        <div className="h-[108px] flex border-b-2 border-b-black pr-[4px]">
          <div className="flex-1 overflow-hidden bg-white min-w-0 text-[11.1px]">
            <div className="flex h-[17px] bg-[#d4d0c8]">
              <div className={`w-[1180px] flex items-center pl-[7px] ${raised}`}>Name</div>
              <div className={`w-[557px] flex items-center pl-[7px] ${raised}`}>Category</div>
              <div className={`flex-1 flex items-center justify-end pr-[6px] gap-[10px] ${raised}`}>Date
                <svg width="7" height="8" viewBox="0 0 7 8"><path d="M.5.5h6l-3 7z" fill="none" stroke="#777" /></svg>
              </div>
            </div>
            {articles.map(([n, c, dt], i) => (
              <div key={i} className={`flex h-[20px] items-center border-b border-b-[#c4c4c4] ${i % 2 ? 'bg-[#ececec]' : 'bg-white'}`}>
                <div className="w-[1180px] h-full flex items-center pl-[6px] gap-[7px] border-r border-r-[#c4c4c4] whitespace-nowrap"><DocIco />{n}</div>
                <div className="w-[557px] h-full flex items-center pl-[4px] border-r border-r-[#c4c4c4]">{c}</div>
                <div className="flex-1 text-right pr-[4px]">{dt}</div>
              </div>
            ))}
          </div>
          <div className="w-[16px] flex flex-col">
            <ScrollBtn up />
            <div className={`flex-1 ${track}`}><div className={`h-[6px] bg-[#d4d0c8] ${raised}`} /></div>
            <ScrollBtn />
          </div>
        </div>
        <div className="flex h-[18px]">
          {bottom.map(([t, c, n]) => (
            <div key={t} className={`${c} h-[16px] flex items-center text-[#666] border-r border-r-[#404040]`}>{t}{n && <span className="text-[8px] text-[#ff2040] ml-[3px] mt-[5px]">{n}</span>}</div>
          ))}
          <div className="w-[76px] ml-[-1px] h-[18px] bg-white border-r border-b border-r-black border-b-black pl-[10px] flex items-center">Articles<span className="text-[8px] text-[#ff2040] ml-[3px] mt-[5px]">886</span></div>
          {after.map(([t, c]) => (
            <div key={t} className={`${c} h-[16px] flex items-center text-[#666] border-r border-r-[#404040]`}>{t}</div>
          ))}
        </div>
      </div>
    </div>
  )
}

function StatusBar() {
  const cells = [['Default', 'w-[116px]'], ['00/00/0000 00:00', 'w-[100px]'], ['O: 000.000', 'w-[70px]'], ['H: 000.000', 'w-[70px]'], ['L: 000.000', 'w-[68px]'], ['C: 000.000', 'w-[69px]'], ['V: 00000', 'w-[65px]']]
  return (
    <div className="flex-1 flex items-center border-t-2 border-t-[#808080] pl-[3px] pt-[4px]">
      <span className="w-[1164px] shrink-0">For Help, press F1</span>
      {cells.map(([t, w]) => (
        <span key={t} className={`${w} shrink-0 pl-[4px] h-[18px] flex items-center border-l border-l-[#808080]`}>{t}</span>
      ))}
      <span className="pl-[5px] h-[18px] flex items-center gap-[4px] border-l border-l-[#808080]">
        <svg width="23" height="16" viewBox="0 0 23 16">
          <rect width="23" height="16" fill="#a01818" />
          <path d="M2 0v16M5 0v16M8 0v16M11 0v16M14 0v16M17 0v16M20 0v16" stroke="#e8c0a8" strokeWidth=".8" />
          <path d="M0 12L23 4" stroke="#e8c0a8" strokeWidth=".8" />
        </svg>
        No connection
      </span>
    </div>
  )
}

const Radio = ({ on }) => (
  <span className="w-[13px] h-[13px] rounded-full bg-white border border-t-[#505050] border-l-[#505050] border-r-white border-b-white shrink-0 flex items-center justify-center">
    {on && <span className="w-[5px] h-[5px] rounded-full bg-black" />}
  </span>
)

function Dialog() {
  const btn = `w-[83px] h-[23px] bg-[#d4d0c8] text-[11.5px] text-[#222] ${raised}`
  return (
    <div className="absolute left-[621px] top-[290px] w-[546px] h-[402px] flex flex-col bg-[#d4d0c8] rounded-t-[6px] overflow-hidden text-[11px] text-[#222]">
      <div className="h-[30px] shrink-0 bg-gradient-to-b from-[#5a564d] to-[#3c3a33] flex items-center justify-end pr-[6px]">
        <span className="w-[16px] h-[16px] rounded-full bg-[#e2552b] border border-[#8a3a1c] flex items-center justify-center">
          <svg width="8" height="8" viewBox="0 0 8 8"><path d="M1 1l6 6M7 1L1 7" stroke="#5c2410" strokeWidth="1.200" /></svg>
        </span>
      </div>
      <div className="h-[58px] shrink-0 bg-white pl-[20px] pt-[10px] border-b-2 border-b-[#a0a0a0] leading-[15px]">
        <div className="tracking-[0.6px]">Select account type</div>
        <div className="pl-[20px]">To start working an account is required:</div>
      </div>
      <div className="pl-[22px] pt-[24px] leading-[13px]">
        <p>To start working, you need a valid trade account. If you don't have it, you can create a demo</p>
        <p>or real account by selecting the corresponding option below and pressing 'Next':</p>
      </div>
      <div className="ml-[71px] mt-[25px] flex items-center h-[14px]">
        <Radio on />
        <span className="ml-[3px] px-[1px] border border-dotted border-[#222] w-[116px] leading-[13px] whitespace-nowrap">Existing trade account</span>
      </div>
      <div className="flex items-center mt-[13px]">
        <span className="w-[137px] text-right">Login:</span>
        <input readOnly className={`ml-[10px] w-[127px] h-[19px] bg-white ${sunken}`} />
      </div>
      <div className="flex items-center mt-[9px]">
        <span className="w-[137px] text-right">Password:</span>
        <input readOnly className={`ml-[10px] w-[127px] h-[19px] bg-white ${sunken}`} />
        <span className={`ml-[9px] w-[13px] h-[13px] bg-white flex items-center justify-center ${sunken}`}>
          <svg width="9" height="9" viewBox="0 0 9 9"><path d="M1 4.500l2.500 3L8 1" fill="none" stroke="#000" strokeWidth="1.800" /></svg>
        </span>
        <span className="ml-[4px]">Save password</span>
      </div>
      <div className="flex items-center mt-[12px] h-[14px]">
        <span className="w-[138px] text-right">Server:</span>
        <span className="ml-[8px]">AdmiralMarkets-Demo</span>
      </div>
      <div className="ml-[71px] mt-[18px] flex items-center h-[14px] gap-[4px]"><Radio />New demo account</div>
      <div className="ml-[71px] mt-[12px] flex items-center h-[14px] gap-[4px]"><Radio />New real account</div>
      <div className="mt-auto h-[46px] border-t-2 border-t-white flex items-start pt-[10px] pl-[273px]">
        <button className={`${btn} outline outline-1 outline-black`}>&lt; <span className="underline">B</span>ack</button>
        <button className={btn}>Finish</button>
        <button className={`${btn} ml-[12px]`}>Cancel</button>
      </div>
    </div>
  )
}

export default function App() {
  return (
    <div className="relative w-[1854px] h-[1023px] flex flex-col overflow-hidden bg-[#d4d0c8] font-['Liberation_Sans',Arial,sans-serif] text-[11px] text-[#1c1c1c]">
      <MenuBar />
      <Toolbars />
      <div className="h-[791px] shrink-0 flex">
        <div className="w-[190px] shrink-0 flex flex-col">
          <MarketWatch />
          <Navigator />
        </div>
        <Mdi />
      </div>
      <Terminal />
      <StatusBar />
      <Dialog />
    </div>
  )
}
